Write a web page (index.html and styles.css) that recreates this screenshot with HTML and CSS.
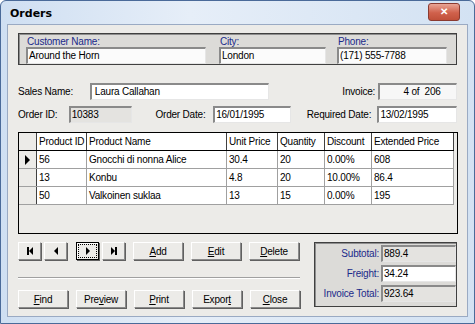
FILE: index.html
```html
<!DOCTYPE html>
<html lang="en">
<head>
  <meta charset="UTF-8" />
  <title>Orders</title>
  <link rel="stylesheet" href="styles.css">
</head>
<body>

  <div class="window">
    <div class="titlebar">
      <span class="title">Orders</span>
      <span class="close-btn">&#x2715;</span>
    </div>

    <div class="client">

      <!-- customer group -->
      <div class="customer-box">
        <div class="field name-field">
          <label>Customer Name:</label>
          <div class="input">Around the Horn</div>
        </div>
        <div class="field city-field">
          <label>City:</label>
          <div class="input">London</div>
        </div>
        <div class="field phone-field">
          <label>Phone:</label>
          <div class="input">(171) 555-7788</div>
        </div>
      </div>

      <div class="row sales-row">
        <span class="lbl sales-lbl">Sales Name:</span>
        <div class="input sales-input">Laura Callahan</div>
        <span class="lbl invoice-lbl">Invoice:</span>
        <div class="input invoice-input">4 of &nbsp;206</div>
      </div>

      <div class="row order-row">
        <span class="lbl orderid-lbl">Order ID:</span>
        <div class="input readonly orderid-input">10383</div>
        <span class="lbl orderdate-lbl">Order Date:</span>
        <div class="input orderdate-input">16/01/1995</div>
        <span class="lbl reqdate-lbl">Required Date:</span>
        <div class="input reqdate-input">13/02/1995</div>
      </div>

      <div class="grid">
        <table>
          <tr class="head">
            <th class="rh"></th>
            <th class="c-id">Product ID</th>
            <th class="c-name">Product Name</th>
            <th class="c-price">Unit Price</th>
            <th class="c-qty">Quantity</th>
            <th class="c-disc">Discount</th>
            <th class="c-ext">Extended Price</th>
          </tr>
          <tr>
            <td class="rh"><span class="marker"></span></td>
            <td>56</td><td>Gnocchi di nonna Alice</td><td>30.4</td><td>20</td><td>0.00%</td><td>608</td>
          </tr>
          <tr>
            <td class="rh"></td>
            <td>13</td><td>Konbu</td><td>4.8</td><td>20</td><td>10.00%</td><td>86.4</td>
          </tr>
          <tr>
            <td class="rh"></td>
            <td>50</td><td>Valkoinen suklaa</td><td>13</td><td>15</td><td>0.00%</td><td>195</td>
          </tr>
        </table>
      </div>

      <div class="bottom">
        <div class="actions">
          <div class="btn-row">
            <button class="nav"><span class="bar"></span><span class="tri-l"></span></button>
            <button class="nav"><span class="tri-l"></span></button>
            <button class="nav focused"><span class="focus-ring"><span class="tri-r"></span></span></button>
            <button class="nav"><span class="tri-r"></span><span class="bar"></span></button>
            <button class="btn"><u>A</u>dd</button>
            <button class="btn"><u>E</u>dit</button>
            <button class="btn"><u>D</u>elete</button>
          </div>
          <div class="separator"></div>
          <div class="btn-row">
            <button class="btn"><u>F</u>ind</button>
            <button class="btn">Pre<u>v</u>iew</button>
            <button class="btn"><u>P</u>rint</button>
            <button class="btn">Expor<u>t</u></button>
            <button class="btn"><u>C</u>lose</button>
          </div>
        </div>

        <div class="totals">
          <div class="total-row">
            <span class="tlbl">Subtotal:</span>
            <div class="input readonly tinput">889.4</div>
          </div>
          <div class="total-row">
            <span class="tlbl">Freight:</span>
            <div class="input tinput">34.24</div>
          </div>
          <div class="total-row">
            <span class="tlbl">Invoice Total:</span>
            <div class="input readonly tinput">923.64</div>
          </div>
        </div>
      </div>

    </div>
  </div>

</body>
</html>
```

FILE: styles.css
```css
body {
  margin: 0;
  font-family: "Liberation Sans", Arial, sans-serif;
  font-size: 10px;
  letter-spacing: -0.2px;
  color: #000;
  background: #fff;
}

.window {
  width: 475px;
  height: 324px;
  box-sizing: border-box;
  border: 1px solid #4a6a99;
  border-radius: 6px 6px 0 0;
  background: linear-gradient(to right, #cfdff2, #e6eef8 40%, #d3e2f3);
  padding: 0 6px 6px 6px;
}

.titlebar {
  height: 23px;
  display: flex;
  align-items: center;
  justify-content: space-between;
}

.title {
  font-family: "DejaVu Sans", sans-serif;
  font-weight: bold;
  font-size: 11px;
  letter-spacing: 0;
  margin-left: 3px;
  margin-top: 1px;
}

.close-btn {
  width: 30px;
  height: 16px;
  margin-right: 8px;
  margin-top: -2px;
  border: 1px solid #8a3a30;
  border-radius: 3px;
  background: linear-gradient(#e9a595, #d0614c 55%, #c0503a);
  color: #fff;
  font-size: 10px;
  font-weight: bold;
  display: flex;
  align-items: center;
  justify-content: center;
}

.client {
  height: 293px;
  background: #ecebe8;
  border: 1px solid #9aaac3;
  padding: 8px 10px 0 10px;
  box-sizing: border-box;
}

.customer-box {
  display: flex;
  height: 32px;
  box-sizing: border-box;
  border: 1px solid #404040;
  box-shadow: inset 1px 1px 0 #8e8e8e;
  background: #dcdbd8;
  padding: 2px 0 0 7px;
}

.field label {
  display: block;
  color: #1a2a8a;
  height: 11px;
  line-height: 11px;
  margin-left: 1px;
}

.name-field .input { width: 180px; }
.city-field { margin-left: 13px; }
.city-field .input { width: 107px; }
.phone-field { margin-left: 11px; }
.phone-field .input { width: 110px; }

.input {
  height: 17px;
  box-sizing: border-box;
  background: #fff;
  border-top: 2px solid #8a8a8a;
  border-left: 2px solid #8a8a8a;
  border-bottom: 1px solid #e6e6e6;
  border-right: 1px solid #e6e6e6;
  line-height: 14px;
  padding-left: 1px;
  white-space: nowrap;
  overflow: hidden;
}

.field .input { background: #fbfbfb; }

.readonly { background: #e4e3e0; }

.row {
  display: flex;
  align-items: center;
}

.sales-row { margin-top: 18px; }
.order-row { margin-top: 6px; }

.lbl { display: inline-block; }

.sales-lbl { width: 72px; }
.sales-input { width: 180px; padding-left: 3px; }
.invoice-lbl { margin-left: 73px; width: 36px; }
.invoice-input { width: 79px; text-align: center; padding-left: 8px; background: #f7f7f7; }

.orderid-lbl { width: 51px; }
.orderid-input { width: 64px; }
.orderdate-lbl { margin-left: 23px; width: 58px; }
.orderdate-input { width: 78px; }
.reqdate-lbl { margin-left: 16px; width: 71px; }
.reqdate-input { width: 80px; }

.grid {
  margin-top: 9px;
  width: 440px;
  height: 102px;
  box-sizing: border-box;
  border: 1px solid #000;
  background: #ecebe8;
}

.grid table {
  border-collapse: collapse;
}

.grid th,
.grid td {
  height: 17px;
  padding: 0 0 0 2px;
  border: 1px solid #a0a0a0;
  background: #fff;
  text-align: left;
  font-weight: normal;
  white-space: nowrap;
  line-height: 15px;
}

.grid tr:first-child th { border-top: none; }
.grid tr th:first-child,
.grid tr td:first-child { border-left: none; }

.grid .head th {
  border-bottom: 1px solid #000;
  border-right-color: #404040;
}

.grid .rh {
  width: 17px;
  background: #ecebe8;
  padding: 0;
  border-right-color: #404040;
}

.c-id { width: 47px; }
.c-name { width: 137px; }
.c-price { width: 48px; }
.c-qty { width: 44px; }
.c-disc { width: 44px; }
.c-ext { width: 79px; }

.marker {
  display: block;
  width: 0;
  height: 0;
  margin-left: 6px;
  border-top: 5px solid transparent;
  border-bottom: 5px solid transparent;
  border-left: 5px solid #000;
}

.bottom {
  display: flex;
  margin-top: 8px;
}

.actions {
  width: 282px;
}

.btn-row {
  display: flex;
  gap: 8px;
}

.separator {
  margin: 17px 0 11px 0;
  height: 0;
  border-top: 1px solid #a0a0a0;
  border-bottom: 1px solid #fff;
}

button {
  font-family: inherit;
  font-size: inherit;
  letter-spacing: inherit;
  height: 18px;
  box-sizing: border-box;
  padding: 0;
  background: #ecebe8;
  border-top: 1px solid #fff;
  border-left: 1px solid #fff;
  border-right: 1px solid #8a8a8a;
  border-bottom: 1px solid #8a8a8a;
  box-shadow: 1px 1px 0 #606060;
  color: #000;
}

.btn { width: 50px; }

.btn-row .nav {
  width: 23px;
  display: flex;
  align-items: center;
  justify-content: center;
  margin-right: -5px;
}

.btn-row .nav:nth-child(2) { margin-right: 1px; }
.btn-row .nav:nth-child(4) { margin-right: 0; }

.nav.focused {
  border: 1px solid #000;
  box-shadow: inset 1px 1px 0 #fff, 1px 1px 0 #606060;
}

.focus-ring {
  width: 17px;
  height: 12px;
  outline: 1px dotted #000;
  display: flex;
  align-items: center;
  justify-content: center;
}

.bar {
  width: 2px;
  height: 8px;
  background: #000;
}

.tri-l {
  width: 0;
  height: 0;
  border-top: 4px solid transparent;
  border-bottom: 4px solid transparent;
  border-right: 4px solid #000;
}

.tri-r {
  width: 0;
  height: 0;
  border-top: 4px solid transparent;
  border-bottom: 4px solid transparent;
  border-left: 4px solid #000;
}

.totals {
  margin-left: 14px;
  width: 146px;
  height: 65px;
  box-sizing: border-box;
  border: 1px solid #404040;
  box-shadow: inset 1px 1px 0 #8e8e8e;
  background: #dcdbd8;
  padding: 2px 0 0 0;
  display: flex;
  flex-direction: column;
  gap: 3px;
}

.total-row {
  display: flex;
  align-items: center;
}

.tlbl {
  width: 64px;
  text-align: right;
  color: #1a2a8a;
  padding-right: 2px;
}

.tinput { width: 75px; }
```
